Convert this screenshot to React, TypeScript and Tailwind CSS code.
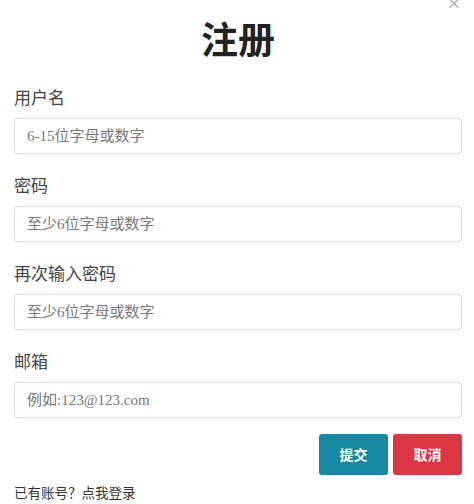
export default function App() {
  const fields = [
    { label: "用户名", placeholder: "6-15位字母或数字" },
    { label: "密码", placeholder: "至少6位字母或数字" },
    { label: "再次输入密码", placeholder: "至少6位字母或数字" },
    { label: "邮箱", placeholder: "例如:123@123.com" },
  ];

  return (
    <div className="relative w-[474px] h-[504px] overflow-hidden bg-white pl-[14px] pr-[12px] font-['Noto_Sans_CJK_SC',sans-serif]">
      <span className="absolute right-[13px] top-[-8px] text-[14px] text-gray-400">×</span>

      <h1 className="pt-[14px] text-center text-[37px] font-bold leading-[48px] text-[#222]">注册</h1>

      <form className="mt-[23px] flex flex-col">
        {fields.map((f) => (
          <div key={f.label} className="mb-[19px] flex h-[69px] flex-col">
            <label className="mb-[9px] h-[24px] text-[17px] leading-[24px] text-[#444]">{f.label}</label>
            <input
              type="text"
              placeholder={f.placeholder}
              className="h-[36px] w-full rounded-[4px] border border-[#dcdcdc] px-[12px] text-[15px] text-[#444] outline-none placeholder:text-[#777] font-['Liberation_Serif','Noto_Sans_CJK_SC',serif]"
            />
          </div>
        ))}

        <div className="-mt-[3px] flex justify-end gap-[5px]">
          <button
            type="button"
            className="h-[41px] w-[69px] rounded-[3px] bg-[#14899f] text-[14px] font-bold text-white"
          >
            提交
          </button>
          <button
            type="button"
            className="h-[41px] w-[69px] rounded-[3px] bg-[#dc3545] text-[14px] font-bold text-white"
          >
            取消
          </button>
        </div>
      </form>

      <p className="mt-[8px] text-[13.5px] leading-[18px] text-[#333]">已有账号？点我登录</p>
    </div>
  );
}
